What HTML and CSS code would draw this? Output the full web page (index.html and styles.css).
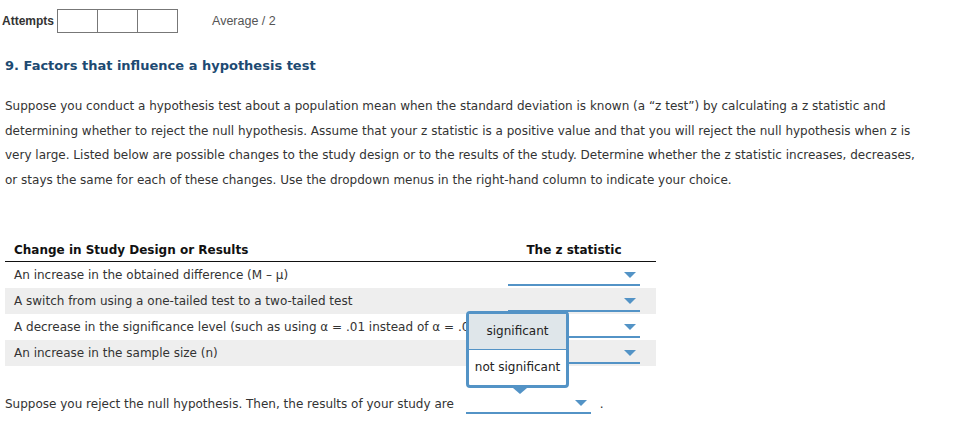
FILE: index.html
```
<!DOCTYPE html>
<html>
<head>
<meta charset="utf-8">
<link rel="stylesheet" href="styles.css">
</head>
<body>
<div class="attempts">
  <span class="attempts-label">Attempts</span>
  <span class="boxes"><span class="box"></span><span class="box"></span><span class="box"></span></span>
  <span class="average">Average / 2</span>
</div>
<h2 class="title">9. Factors that influence a hypothesis test</h2>
<p class="intro">Suppose you conduct a hypothesis test about a population mean when the standard deviation is known (a “z test”) by calculating a z statistic and determining whether to reject the null hypothesis. Assume that your z statistic is a positive value and that you will reject the null hypothesis when z is very large. Listed below are possible changes to the study design or to the results of the study. Determine whether the z statistic increases, decreases, or stays the same for each of these changes. Use the dropdown menus in the right-hand column to indicate your choice.</p>
<table class="grid">
  <thead>
    <tr><th class="c1">Change in Study Design or Results</th><th class="c2">The z statistic</th></tr>
  </thead>
  <tbody>
    <tr><td class="c1">An increase in the obtained difference (M – μ)</td><td class="c2"><div class="dd"><span class="tri"></span></div></td></tr>
    <tr class="alt"><td class="c1">A switch from using a one-tailed test to a two-tailed test</td><td class="c2"><div class="dd"><span class="tri"></span></div></td></tr>
    <tr><td class="c1">A decrease in the significance level (such as using α = .01 instead of α = .05)</td><td class="c2"><div class="dd"><span class="tri"></span></div></td></tr>
    <tr class="alt"><td class="c1">An increase in the sample size (n)</td><td class="c2"><div class="dd"><span class="tri"></span></div></td></tr>
  </tbody>
</table>
<div class="final"><span>Suppose you reject the null hypothesis. Then, the results of your study are</span><span class="dd inline"><span class="tri"></span></span><span>.</span></div>
<div class="popup">
  <div class="opt sel">significant</div>
  <div class="opt">not significant</div>
  <span class="pointer"></span>
</div>
</body>
</html>
```
FILE: styles.css
```
html, body {
  margin: 0;
  padding: 0;
  background: #fff;
}
body {
  font-family: "DejaVu Sans", Verdana, sans-serif;
  font-size: 12px;
  color: #333;
  position: relative;
  width: 957px;
  height: 435px;
  overflow: hidden;
}
.attempts {
  display: flex;
  align-items: center;
  padding: 9px 0 0 2px;
  height: 24px;
  font-family: "Liberation Sans", Arial, sans-serif;
  font-size: 12px;
}
.attempts-label {
  font-weight: bold;
  color: #333;
  margin-right: 3px;
}
.boxes {
  display: flex;
  border: 1px solid #777;
}
.box {
  width: 39px;
  height: 22px;
  border-left: 1px solid #777;
}
.box:first-child {
  border-left: none;
}
.average {
  margin-left: 34px;
  color: #555;
  font-size: 12.5px;
}
.title {
  margin: 25px 0 0 5px;
  font-size: 13px;
  line-height: 16px;
  font-weight: bold;
  color: #1d4a72;
}
.intro {
  margin: 20px 0 0 5px;
  width: 920px;
  line-height: 24.7px;
}
.grid {
  margin: 43px 0 0 5px;
  border-collapse: collapse;
  width: 651px;
}
.grid th {
  height: 21px;
  padding: 0 0 4px 0;
  font-weight: bold;
  color: #111;
  border-bottom: 1px solid #111;
  vertical-align: bottom;
  line-height: 14px;
}
.grid th.c1 {
  text-align: left;
  padding-left: 9px;
}
.grid th.c2 {
  text-align: center;
  width: 132px;
  padding-left: 16px;
  padding-right: 16px;
}
.grid td {
  height: 20px;
  padding: 0;
}
.grid td.c1 {
  padding-left: 9px;
  white-space: nowrap;
  overflow: hidden;
  max-width: 450px;
}
.grid td.c2 {
  padding: 4px 16px 2px 16px;
}
.grid tr.alt td {
  background: #eeeeee;
}
.dd {
  display: flex;
  justify-content: flex-end;
  align-items: flex-start;
  box-sizing: border-box;
  height: 20px;
  padding: 6px 4px 0 0;
  border-bottom: 2px solid #5393c6;
}
.tri {
  width: 0;
  height: 0;
  border-left: 6.5px solid transparent;
  border-right: 6.5px solid transparent;
  border-top: 6px solid #5393c6;
}
.final {
  display: flex;
  align-items: center;
  margin: 28px 0 0 5px;
  line-height: 20px;
}
.dd.inline {
  width: 125px;
  flex: none;
  margin-left: 12px;
  margin-right: 9px;
  padding-right: 4px;
}
.popup {
  position: absolute;
  left: 466px;
  top: 311px;
  width: 97px;
  border: 3px solid #5393c6;
  border-radius: 4px;
  background: #fff;
}
.opt {
  height: 35px;
  line-height: 35px;
  text-align: center;
  color: #222;
}
.opt.sel {
  background: #dfe6ea;
  border-bottom: 1px solid #5393c6;
}
.pointer {
  position: absolute;
  left: 44px;
  bottom: -9px;
  width: 0;
  height: 0;
  border-left: 7px solid transparent;
  border-right: 7px solid transparent;
  border-top: 6px solid #5393c6;
}
```
